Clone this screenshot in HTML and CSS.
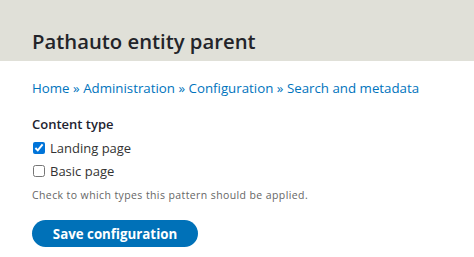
FILE: index.html
```html
<!DOCTYPE html>
<html>
<head>
<meta charset="utf-8">
<link rel="stylesheet" href="styles.css">
</head>
<body>
<header class="page-header">
  <h1 class="page-title">Pathauto entity parent</h1>
</header>
<main class="content">
  <nav class="breadcrumb">
    <a href="#">Home</a> <span class="sep">»</span>
    <a href="#">Administration</a> <span class="sep">»</span>
    <a href="#">Configuration</a> <span class="sep">»</span>
    <a href="#">Search and metadata</a>
  </nav>
  <form class="form">
    <fieldset class="field">
      <div class="label">Content type</div>
      <label class="check"><input type="checkbox" checked> Landing page</label>
      <label class="check"><input type="checkbox"> Basic page</label>
      <div class="desc">Check to which types this pattern should be applied.</div>
    </fieldset>
    <button type="button" class="btn">Save configuration</button>
  </form>
</main>
</body>
</html>
```
FILE: styles.css
```css
html, body { margin: 0; padding: 0; background: #fff; }
body { font-family: "Open Sans", "DejaVu Sans", sans-serif; color: #222330; }
.page-header { background: #e0e0d8; height: 61px; padding: 0 32px; box-sizing: border-box; display: flex; align-items: flex-end; }
.page-title { margin: 0 0 6px; font-size: 20.3px; font-weight: 600; color: #232429; line-height: 28px; }
.content { padding: 0 32px; }
.breadcrumb { margin-top: 18px; font-size: 13.3px; line-height: 18px; color: #0074bd; }
.breadcrumb a { color: #0074bd; text-decoration: none; }
.breadcrumb .sep { color: #0074bd; }
.form { margin-top: 18px; }
.field { border: 0; margin: 0; padding: 0; display: flex; flex-direction: column; }
.label { font-size: 13px; font-weight: 600; line-height: 18px; margin-bottom: 6px; }
.check { font-size: 13px; line-height: 18px; display: flex; align-items: center; gap: 3px; margin-bottom: 5px; color: #333; }
.check input { margin: 0 2px 0 1px; width: 12px; height: 12px; accent-color: #0074d9; }
.desc { font-size: 10.5px; letter-spacing: 0.4px; color: #666; line-height: 14px; margin-top: 3px; }
.btn { margin-top: 18px; width: 166px; height: 27px; border-radius: 14px; border: 0; background: #0071b8; color: #fff; font-family: "Open Sans", sans-serif; font-weight: 700; font-size: 13.3px; padding: 0; }
```
